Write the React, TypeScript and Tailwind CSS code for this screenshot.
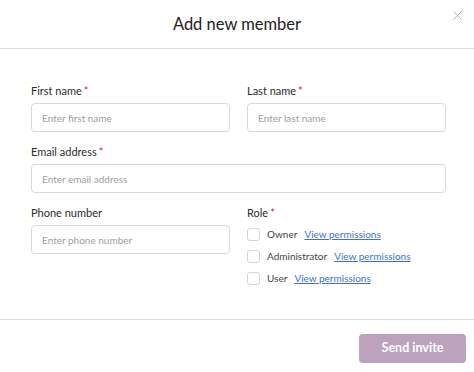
import { X } from "lucide-react";

function Label({ text, required }: { text: string; required?: boolean }) {
  return (
    <div className="h-[14px] text-[11px] leading-[14px] text-[#2b2b2b] mb-[5px]">
      {text}
      {required && <span className="text-[#d6263b] ml-[2px]">*</span>}
    </div>
  );
}

function Input({ placeholder }: { placeholder: string }) {
  return (
    <input
      placeholder={placeholder}
      className="w-full h-[29px] rounded-[4px] border border-[#d9d9d9] px-[10px] text-[10px] text-[#333] placeholder:text-[#a0a0a0] outline-none"
    />
  );
}

const ROLES = ["Owner", "Administrator", "User"];

export default function App() {
  return (
    <div
      className="w-[474px] h-[372px] bg-white flex flex-col"
      style={{ fontFamily: "Lato, 'Open Sans', sans-serif" }}
    >
      {/* header */}
      <div className="relative h-[49px] shrink-0 flex items-center justify-center border-b border-[#dcdcdc]">
        <h2 className="text-[16.5px] text-[#222]">Add new member</h2>
        <button className="absolute right-[9px] top-[8px] text-[#a8a8a8]">
          <X size={15} strokeWidth={1.4} />
        </button>
      </div>

      {/* body */}
      <div className="flex-1 pl-[31px] pr-[28px] pt-[35px]">
        <div className="grid grid-cols-2 gap-x-[17px] gap-y-[13px]">
          <div>
            <Label text="First name" required />
            <Input placeholder="Enter first name" />
          </div>
          <div>
            <Label text="Last name" required />
            <Input placeholder="Enter last name" />
          </div>
          <div className="col-span-2">
            <Label text="Email address" required />
            <Input placeholder="Enter email address" />
          </div>
          <div>
            <Label text="Phone number" />
            <Input placeholder="Enter phone number" />
          </div>
          <div>
            <Label text="Role" required />
            <div className="flex flex-col gap-[8px] pt-[2px]">
              {ROLES.map((role) => (
                <div key={role} className="flex items-center h-[14px] text-[10px]">
                  <span className="w-[13px] h-[13px] rounded-[3px] border border-[#d4d4d4] mr-[7px]" />
                  <span className="text-[#444] mr-[7px]">{role}</span>
                  <a href="#" className="text-[#3d6fd6] underline">
                    View permissions
                  </a>
                </div>
              ))}
            </div>
          </div>
        </div>
      </div>

      {/* footer */}
      <div className="h-[53px] shrink-0 border-t border-[#dcdcdc] flex items-start justify-end pr-[8px] pt-[14px]">
        <button className="w-[107px] h-[29px] rounded-[4px] bg-[#bca2bd] text-white text-[12.5px] font-bold">
          Send invite
        </button>
      </div>
    </div>
  );
}
